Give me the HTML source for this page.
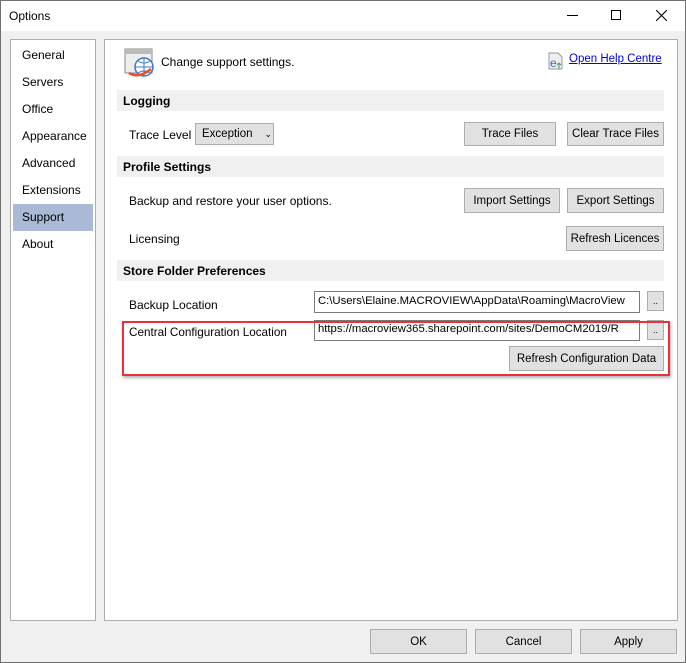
<!DOCTYPE html>
<html><head><style>
*{box-sizing:border-box;margin:0;padding:0}
body{width:686px;height:663px;background:#f0f0f0;font-family:"Liberation Sans",sans-serif;font-size:12px;color:#000;position:relative;overflow:hidden}
.a{position:absolute}
.btn{position:absolute;background:#e1e1e1;border:1px solid #adadad;text-align:center;font-size:11.5px;display:flex;align-items:center;justify-content:center;white-space:nowrap}
.hdr{position:absolute;left:117px;width:547px;height:21px;background:#f0f0f0;font-weight:bold;font-size:12px;padding:4px 0 0 6px}
.inp{position:absolute;background:#fff;border:1px solid #7a7a7a;padding:3px 3px;white-space:nowrap;overflow:hidden;font-size:11.3px}
.nav div{height:27px;padding-left:11px;line-height:27px;font-size:12px}
.t{position:absolute;font-size:12px}
</style></head><body>
<div class="a" style="left:0;top:0;width:686px;height:663px;border:1px solid #707070"></div>
<div class="a" style="left:1px;top:1px;width:684px;height:30px;background:#fff"></div>
<div class="a" style="left:9px;top:9px;font-size:12px">Options</div>
<div class="a" style="left:567px;top:15px;width:11px;height:1px;background:#000"></div>
<div class="a" style="left:611px;top:10px;width:10px;height:10px;border:1px solid #000"></div>
<svg class="a" style="left:656px;top:10px" width="11" height="11"><path d="M0 0L11 11M11 0L0 11" stroke="#000" stroke-width="1.1"/></svg>

<div class="a nav" style="left:10px;top:39px;width:86px;height:582px;background:#fff;border:1px solid #adadad;padding-top:2px">
<div>General</div><div>Servers</div><div>Office</div><div>Appearance</div><div>Advanced</div><div>Extensions</div><div style="background:#a9b9d6;margin:0 2px;padding-left:9px">Support</div><div>About</div>
</div>

<div class="a" style="left:104px;top:39px;width:574px;height:582px;background:#fff;border:1px solid #adadad"></div>
<svg class="a" style="left:124px;top:48px" width="32" height="30"><rect x="1" y="1" width="27" height="24" fill="#eee" stroke="#888"/><rect x="1" y="1" width="27" height="5" fill="#bbb"/><circle cx="20" cy="19" r="9" fill="#fff" stroke="#3a78c8" stroke-width="1.5"/><path d="M11 19h18M20 10v18M14 13q6 4 12 0M14 25q6-4 12 0" stroke="#3a78c8" fill="none"/><path d="M5 25q10 6 22-4" stroke="#e8502a" stroke-width="2.5" fill="none"/></svg>
<div class="t" style="left:161px;top:55px">Change support settings.</div>
<svg class="a" style="left:548px;top:52px" width="16" height="18"><path d="M1 1h9l4 4v12H1z" fill="#eee" stroke="#999"/><text x="2" y="15" font-size="12" fill="#2a6fc0" font-family="Liberation Sans">e</text><path d="M11 17v-6M9 13l2-2 2 2" stroke="#4a9a6a" fill="none"/></svg>
<div class="a" style="left:569px;top:53px;color:#0000ee;text-decoration:underline;font-size:11.5px">Open Help Centre</div>

<div class="hdr" style="top:90px">Logging</div>
<div class="t" style="left:129px;top:128px">Trace Level</div>
<div class="btn" style="left:195px;top:123px;width:79px;height:22px;justify-content:flex-start;padding-left:6px">Exception <span style="margin-left:12px;font-size:9px">&#8964;</span></div>
<div class="btn" style="left:464px;top:122px;width:92px;height:24px">Trace Files</div>
<div class="btn" style="left:567px;top:122px;width:97px;height:24px">Clear Trace Files</div>

<div class="hdr" style="top:156px">Profile Settings</div>
<div class="t" style="left:129px;top:194px">Backup and restore your user options.</div>
<div class="btn" style="left:464px;top:188px;width:96px;height:25px">Import Settings</div>
<div class="btn" style="left:567px;top:188px;width:97px;height:25px">Export Settings</div>
<div class="t" style="left:129px;top:232px">Licensing</div>
<div class="btn" style="left:566px;top:226px;width:98px;height:25px">Refresh Licences</div>

<div class="hdr" style="top:260px">Store Folder Preferences</div>
<div class="t" style="left:129px;top:298px">Backup Location</div>
<div class="inp" style="left:314px;top:291px;width:326px;height:22px">C:\Users\Elaine.MACROVIEW\AppData\Roaming\MacroView</div>
<div class="btn" style="left:647px;top:291px;width:17px;height:20px;font-size:9px">..</div>
<div class="t" style="left:129px;top:326px;font-size:11.7px">Central Configuration Location</div>
<div class="inp" style="left:314px;top:320px;width:326px;height:21px;padding-top:2px">https://macroview365.sharepoint.com/sites/DemoCM2019/R</div>
<div class="btn" style="left:647px;top:320px;width:17px;height:20px;font-size:9px">..</div>
<div class="btn" style="left:509px;top:346px;width:155px;height:25px">Refresh Configuration Data</div>
<div class="a" style="left:122px;top:321px;width:548px;height:55px;border:2px solid #e8313a;box-shadow:1px 2px 3px rgba(0,0,0,.3)"></div>

<div class="btn" style="left:370px;top:629px;width:97px;height:25px">OK</div>
<div class="btn" style="left:475px;top:629px;width:97px;height:25px">Cancel</div>
<div class="btn" style="left:580px;top:629px;width:97px;height:25px">Apply</div>
</body></html>
